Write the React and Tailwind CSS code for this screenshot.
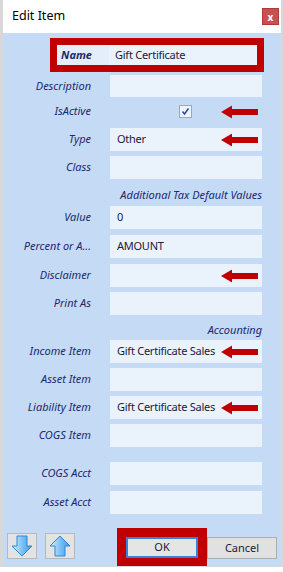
import React from "react";

const font = { fontFamily: "'Noto Sans', 'Open Sans', sans-serif" };

function RedArrow() {
  return (
    <svg width="37" height="13" viewBox="0 0 37 13" className="absolute right-[4px] top-1/2 -translate-y-1/2">
      <polygon points="0,6.5 11,0 11,3.5 37,3.5 37,9.5 11,9.5 11,13" fill="#c00000" />
    </svg>
  );
}

function Row({ label, value, arrow, mt, h = "h-[23px]" }) {
  return (
    <div className={`flex items-center ${mt} ${h}`}>
      <div className="w-[89px] pr-[1px] text-right text-[11px] italic text-[#1c2a6e]">{label}</div>
      <div className="relative ml-[18px] flex h-full w-[152px] items-center bg-[#eaf2fc] pl-[7px] text-[11px] tracking-[-0.25px] text-[#1a1a3c]">
        {value}
        {arrow && <RedArrow />}
      </div>
    </div>
  );
}

function Header({ text, mt, h }) {
  return (
    <div className={`flex items-center justify-end pr-[19px] text-[11px] italic text-[#1c2a6e] ${mt} ${h}`}>
      {text}
    </div>
  );
}

function BlueArrow({ up }) {
  return (
    <svg width="22" height="22" viewBox="0 0 22 22">
      <defs>
        <linearGradient id={up ? "gu" : "gd"} x1="0" y1="0" x2="1" y2="0">
          <stop offset="0" stopColor="#d6efff" />
          <stop offset="0.5" stopColor="#7cc3f5" />
          <stop offset="1" stopColor="#3d97e3" />
        </linearGradient>
      </defs>
      <polygon
        points={up ? "11,1 21,11 16,11 16,21 6,21 6,11 1,11" : "6,1 16,1 16,11 21,11 11,21 1,11 6,11"}
        fill={`url(#${up ? "gu" : "gd"})`}
        stroke="#2f86d8"
        strokeWidth="1"
        strokeLinejoin="round"
      />
    </svg>
  );
}

export default function App() {
  return (
    <div className="h-[572px] w-[283px] bg-white" style={font}>
      <div className="flex h-[567px] w-[283px] flex-col border-x-[3px] border-b border-[#d8d8d8] border-r-[2px]">
        {/* title bar */}
        <div className="flex h-[34px] items-center justify-between bg-white pl-[9px] pr-[2px]">
          <span className="text-[12.5px] text-black">Edit Item</span>
          <div className="flex h-[17px] w-[17px] items-center justify-center border border-[#b03a3a] bg-[#c75050] text-[10px] font-bold leading-none text-white">
            x
          </div>
        </div>

        {/* body */}
        <div className="flex flex-1 flex-col bg-[#c5daf5]">
          {/* Name, highlighted */}
          <div className="ml-[47px] mt-[5px] flex h-[34px] w-[214px] border-[7px] border-[#c00000]">
            <div className="flex w-[52px] items-center justify-end bg-[#e4eefb] pr-[17px] text-[11px] font-bold italic text-[#1c2a6e]">
              Name
            </div>
            <div className="flex flex-1 items-center bg-[#eaf2fc] pl-[6px] text-[11px] tracking-[-0.25px] text-[#1a1a3c]">Gift Certificate</div>
          </div>

          <Row label="Description" mt="mt-[3px]" h="h-[22px]" />

          {/* IsActive */}
          <div className="mt-[3px] flex h-[23px] items-center">
            <div className="w-[89px] pr-[1px] text-right text-[11px] italic text-[#1c2a6e]">IsActive</div>
            <div className="relative ml-[18px] flex h-full w-[152px] items-center">
              <div className="ml-[69px] flex h-[13px] w-[13px] items-center justify-center border border-[#9aa9bd] bg-[#eef3f9]">
                <svg width="9" height="9" viewBox="0 0 9 9">
                  <path d="M1.5 4.5 L3.5 7 L7.5 1.5" fill="none" stroke="#1f4e9c" strokeWidth="1.5" />
                </svg>
              </div>
              <RedArrow />
            </div>
          </div>

          <Row label="Type" value="Other" arrow mt="mt-[5px]" />
          <Row label="Class" mt="mt-[5px]" />
          <Header text="Additional Tax Default Values" mt="mt-[5px]" h="h-[22px]" />
          <Row label="Value" value="0" />
          <Row label="Percent or A..." value="AMOUNT" mt="mt-[6px]" />
          <Row label="Disclaimer" arrow mt="mt-[6px]" />
          <Row label="Print As" mt="mt-[5px]" />
          <Header text="Accounting" mt="mt-[5px]" h="h-[20px]" />
          <Row label="Income Item" value="Gift Certificate Sales" arrow />
          <Row label="Asset Item" mt="mt-[5px]" />
          <Row label="Liability Item" value="Gift Certificate Sales" arrow mt="mt-[5px]" />
          <Row label="COGS Item" mt="mt-[5px]" />
          <Row label="COGS Acct" mt="mt-[15px]" />
          <Row label="Asset Acct" mt="mt-[6px]" />

          {/* bottom buttons */}
          <div className="mt-[14px] flex items-start">
            <div className="ml-[4px] mt-[5px] flex h-[26px] w-[30px] items-center justify-center border border-[#b8b8b8] bg-[#e3e3e3]">
              <BlueArrow />
            </div>
            <div className="ml-[8px] mt-[5px] flex h-[26px] w-[30px] items-center justify-center border border-[#b8b8b8] bg-[#e3e3e3]">
              <BlueArrow up />
            </div>
            <div className="ml-[42px] h-[38px] w-[90px] border-x-[9px] border-b-[8px] border-t-[9px] border-[#c00000]">
              <div className="flex h-[21px] w-full items-center justify-center border-2 border-[#3c7fd6] bg-[#e5e5e5] text-[11px] text-[#1a1a3c]">
                OK
              </div>
            </div>
            <div className="mt-[9px] flex h-[22px] w-[70px] items-center justify-center border border-[#adadad] bg-[#e1e1e1] text-[11px] text-[#1a1a3c]">
              Cancel
            </div>
          </div>
        </div>
      </div>
    </div>
  );
}
